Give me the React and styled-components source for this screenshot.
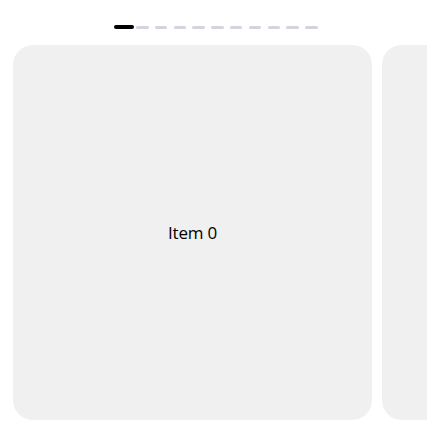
import React from 'react';
import styled, { createGlobalStyle } from 'styled-components';

const GlobalStyle = createGlobalStyle`
	html, body {
		margin: 0;
		padding: 0;
		background: #ffffff;
	}
	body {
		font-family: "Open Sans", "Noto Sans", sans-serif;
	}
`;

const Wrapper = styled.div`
	display: flex;
	flex-direction: column;
	width: 427px;
	padding-top: 25px;
	overflow: hidden;
`;

const Dots = styled.div`
	display: flex;
	align-items: center;
	height: 4px;
	padding-left: 114px;
	gap: 6.3px;
`;

const Dot = styled.span`
	display: block;
	width: ${p => (p.$active ? '19.5px' : '12.5px')};
	height: ${p => (p.$active ? '4px' : '3px')};
	margin-right: ${p => (p.$active ? '-3.8px' : '0')};
	border-radius: 2px;
	background-color: ${p => (p.$active ? '#000000' : '#d5d3dd')};
`;

const Track = styled.div`
	display: flex;
	gap: 10px;
	margin-top: 16px;
	padding-left: 13px;
`;

const Slide = styled.div`
	flex: 0 0 359px;
	height: 375px;
	display: flex;
	align-items: center;
	justify-content: center;
	background-color: #f0f0f0;
	border-radius: 20px;
	color: #000000;
	font-size: 17px;
	letter-spacing: -0.2px;
`;

const items = Array.from({ length: 11 }, (_, i) => `Item ${i}`);

export default function App() {
	const current = 0;
	return (
		<>
			<GlobalStyle />
			<Wrapper>
				<Dots>
					{items.map((item, i) => (
						<Dot key={item} $active={i === current} />
					))}
				</Dots>
				<Track>
					{/* only the current slide and the peek of the next one are in view */}
					{items.slice(0, 2).map((item, i) => (
						<Slide key={item}>{i === current ? item : null}</Slide>
					))}
				</Track>
			</Wrapper>
		</>
	);
}
